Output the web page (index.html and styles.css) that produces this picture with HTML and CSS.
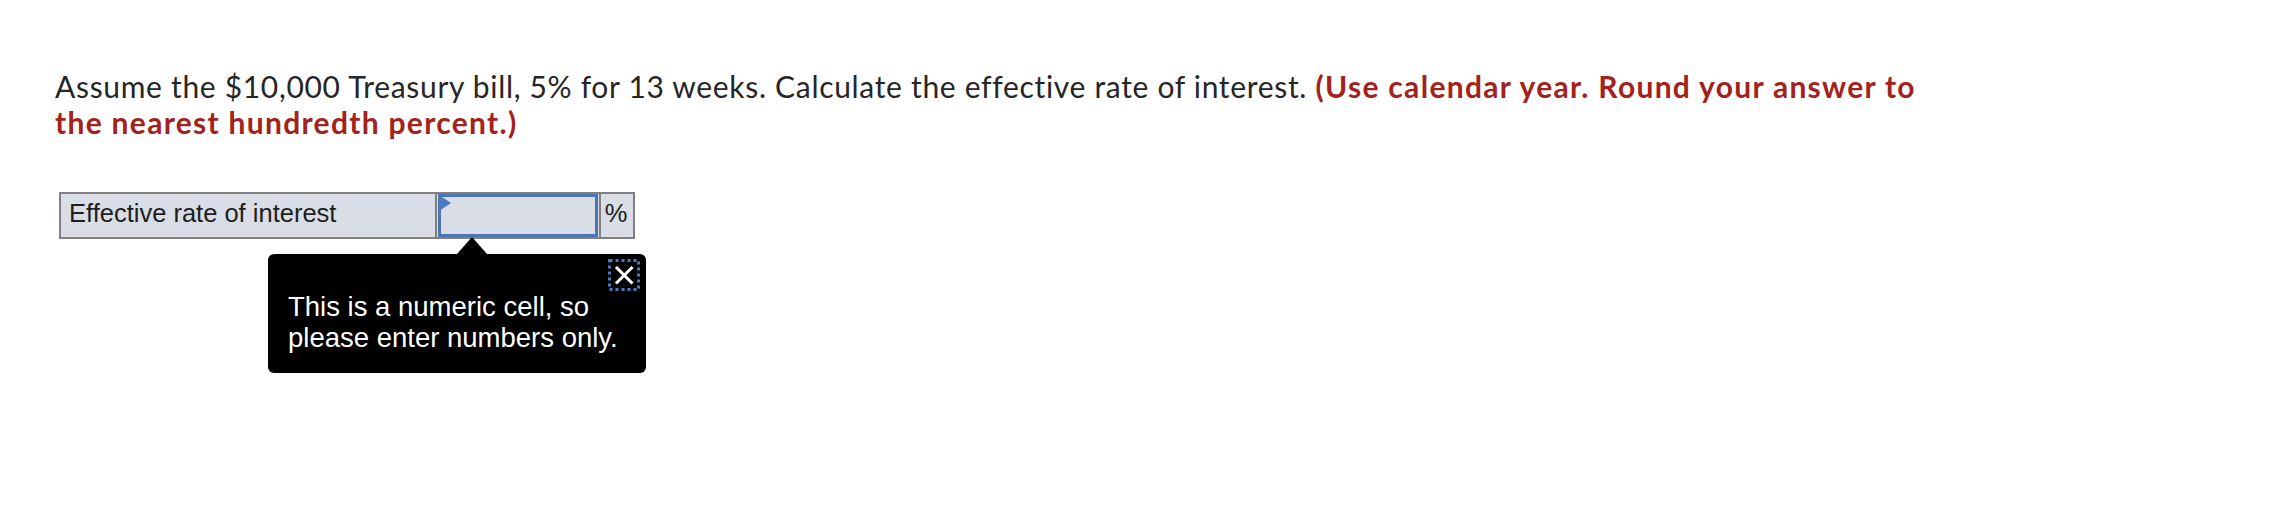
FILE: index.html
```html
<!DOCTYPE html>
<html lang="en">
<head>
<meta charset="utf-8">
<title>Effective rate of interest</title>
<link rel="stylesheet" href="styles.css">
</head>
<body>
<main class="page">
  <p class="question"><span class="prompt">Assume the $10,000 Treasury bill, 5% for 13 weeks. Calculate the effective rate of interest.</span> <strong class="hint">(Use calendar year. Round your answer to</strong> <strong class="hint">the nearest hundredth percent.)</strong></p>

  <div class="answer-wrap">
    <div class="answer-table">
      <div class="cell label">Effective rate of interest</div>
      <div class="cell input-cell">
        <div class="input-box"><span class="corner"></span></div>
      </div>
      <div class="cell unit">%</div>
    </div>

    <div class="tooltip" role="tooltip">
      <div class="tooltip-head">
        <button class="close" aria-label="Close">
          <svg width="32" height="32" viewBox="0 0 32 32">
            <rect x="1.5" y="1.5" width="29" height="29" fill="none" stroke="#4a7bc4" stroke-width="3" stroke-dasharray="3 3"/>
            <path d="M9 9 L23.5 23.5 M23.5 9 L9 23.5" stroke="#fff" stroke-width="3" stroke-linecap="square"/>
          </svg>
        </button>
      </div>
      <p class="tooltip-text">This is a numeric cell, so please enter numbers only.</p>
    </div>
  </div>
</main>
</body>
</html>
```

FILE: styles.css
```css
html, body {
  margin: 0;
  padding: 0;
  background: #ffffff;
}

body {
  width: 2280px;
  height: 514px;
  overflow: hidden;
}

.page {
  padding: 68px 0 0 55px;
}

.question {
  margin: 0;
  max-width: 1900px;
  font-family: Lato, "Noto Sans", sans-serif;
  font-size: 30px;
  letter-spacing: 0.68px;
  line-height: 36px;
  color: #262626;
}

.hint {
  font-weight: 700;
  letter-spacing: 1.3px;
  color: #a3221c;
}

.answer-wrap {
  position: relative;
  margin: 52px 0 0 4px;
  width: 576px;
}

.answer-table {
  display: flex;
  height: 43px;
  border: 2px solid #808080;
  background: #d9dde6;
  font-family: "Liberation Sans", Arial, sans-serif;
  font-size: 25.5px;
  line-height: 29px;
  color: #1e1e1e;
}

.cell {
  box-sizing: border-box;
}

.label {
  width: 376px;
  padding: 5px 0 0 8px;
  border-right: 2px solid #808080;
}

.input-cell {
  width: 164px;
  padding: 0 1px;
  border-right: 2px solid #808080;
}

.input-box {
  position: relative;
  box-sizing: border-box;
  height: 43px;
  border: 3px solid #4a77b4;
}

.corner {
  position: absolute;
  left: -2px;
  top: -2px;
  width: 0;
  height: 0;
  border-top: 8px solid transparent;
  border-bottom: 8px solid transparent;
  border-left: 12px solid #4a7bc4;
}

.unit {
  width: 30px;
  padding: 5px 0 0 0;
  text-align: center;
}

.tooltip {
  position: absolute;
  left: 209px;
  top: 62px;
  box-sizing: border-box;
  width: 378px;
  padding: 5px 6px 20px 20px;
  background: #000000;
  border-radius: 6px;
  color: #ffffff;
  font-family: "Liberation Sans", Arial, sans-serif;
}

.tooltip::before {
  content: "";
  position: absolute;
  left: 189px;
  top: -17px;
  width: 0;
  height: 0;
  border-left: 15.5px solid transparent;
  border-right: 15.5px solid transparent;
  border-bottom: 17px solid #000000;
}

.tooltip-head {
  display: flex;
  justify-content: flex-end;
  height: 32px;
}

.close {
  display: block;
  width: 32px;
  height: 32px;
  padding: 0;
  margin: 0;
  border: 0;
  background: transparent;
}

.close svg {
  display: block;
}

.tooltip-text {
  margin: 0;
  font-size: 27.5px;
  line-height: 31px;
}
```
